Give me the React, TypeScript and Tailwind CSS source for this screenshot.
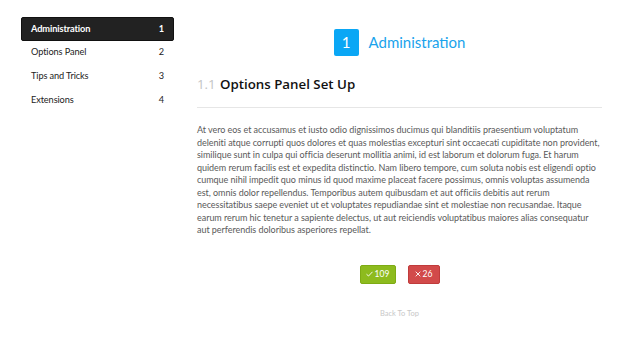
import React from "react";

const items = [
  { label: "Administration", n: 1, active: true },
  { label: "Options Panel", n: 2 },
  { label: "Tips and Tricks", n: 3 },
  { label: "Extensions", n: 4 },
];

export default function App() {
  return (
    <div
      className="w-[621px] h-[339px] bg-white flex pl-[21px] pt-[16px] overflow-hidden"
      style={{ fontFamily: 'Lato, "Open Sans", sans-serif' }}
    >
      <nav className="w-[153px] flex flex-col pt-[1px]">
        {items.map((it) => (
          <div
            key={it.n}
            className={
              "h-[23.6px] flex items-center justify-between px-[9px] text-[9.2px] tracking-[-0.1px] " +
              (it.active
                ? "bg-[#222222] border border-[#111] rounded-[2px] text-white font-bold"
                : "text-[#222] border border-transparent")
            }
          >
            <span>{it.label}</span>
            <span>{it.n}</span>
          </div>
        ))}
      </nav>
      <main className="ml-[23px] w-[405px] flex flex-col">
        <div className="flex items-center justify-center mt-[13px] gap-[10px]">
          <div className="w-[25px] h-[27px] bg-[#0aa7f5] rounded-[2px] text-white flex items-center justify-center text-[15px]">
            1
          </div>
          <div className="text-[#1aa3ec] text-[15px]">Administration</div>
        </div>
        <div
          className="mt-[19px] flex items-center h-[20px] text-[13.3px]"
          style={{ fontFamily: '"Open Sans", sans-serif' }}
        >
          <span className="text-[#c4c4c4] w-[23px]">1.1</span>
          <span className="text-[#111] font-semibold">Options Panel Set Up</span>
        </div>
        <div className="mt-[12px] border-t border-[#e6e6e6]" />
        <p className="mt-[16px] text-[9px] leading-[12.5px] tracking-[-0.04px] text-[#5a5a5a]">
          At vero eos et accusamus et iusto odio dignissimos ducimus qui blanditiis praesentium voluptatum deleniti atque corrupti quos dolores et quas molestias excepturi sint occaecati cupiditate non provident, similique sunt in culpa qui officia deserunt mollitia animi, id est laborum et dolorum fuga. Et harum quidem rerum facilis est et expedita distinctio. Nam libero tempore, cum soluta nobis est eligendi optio cumque nihil impedit quo minus id quod maxime placeat facere possimus, omnis voluptas assumenda est, omnis dolor repellendus. Temporibus autem quibusdam et aut officiis debitis aut rerum necessitatibus saepe eveniet ut et voluptates repudiandae sint et molestiae non recusandae. Itaque earum rerum hic tenetur a sapiente delectus, ut aut reiciendis voluptatibus maiores alias consequatur aut perferendis doloribus asperiores repellat.
        </p>
        <div className="mt-[28px] flex justify-center gap-[12px]">
          <div className="w-[36px] h-[19px] rounded-[2px] bg-[#8dbb1e] border border-[#7eab14] text-white text-[8.5px] flex items-center justify-center gap-[2px]">
            <svg width="7" height="6" viewBox="0 0 7 6" fill="none" stroke="white" strokeWidth="0.9">
              <path d="M0.5 3.2 L2.5 5 L6.5 0.8" />
            </svg>
            <span>109</span>
          </div>
          <div className="w-[32px] h-[19px] rounded-[2px] bg-[#d24a4a] border border-[#c03b3b] text-white text-[8.5px] flex items-center justify-center gap-[2px]">
            <svg width="6" height="6" viewBox="0 0 6 6" fill="none" stroke="white" strokeWidth="0.9">
              <path d="M0.7 0.7 L5.3 5.3 M5.3 0.7 L0.7 5.3" />
            </svg>
            <span>26</span>
          </div>
        </div>
        <div className="mt-[24px] text-center text-[7.5px] text-[#c8c8c8]">Back To Top</div>
      </main>
    </div>
  );
}
